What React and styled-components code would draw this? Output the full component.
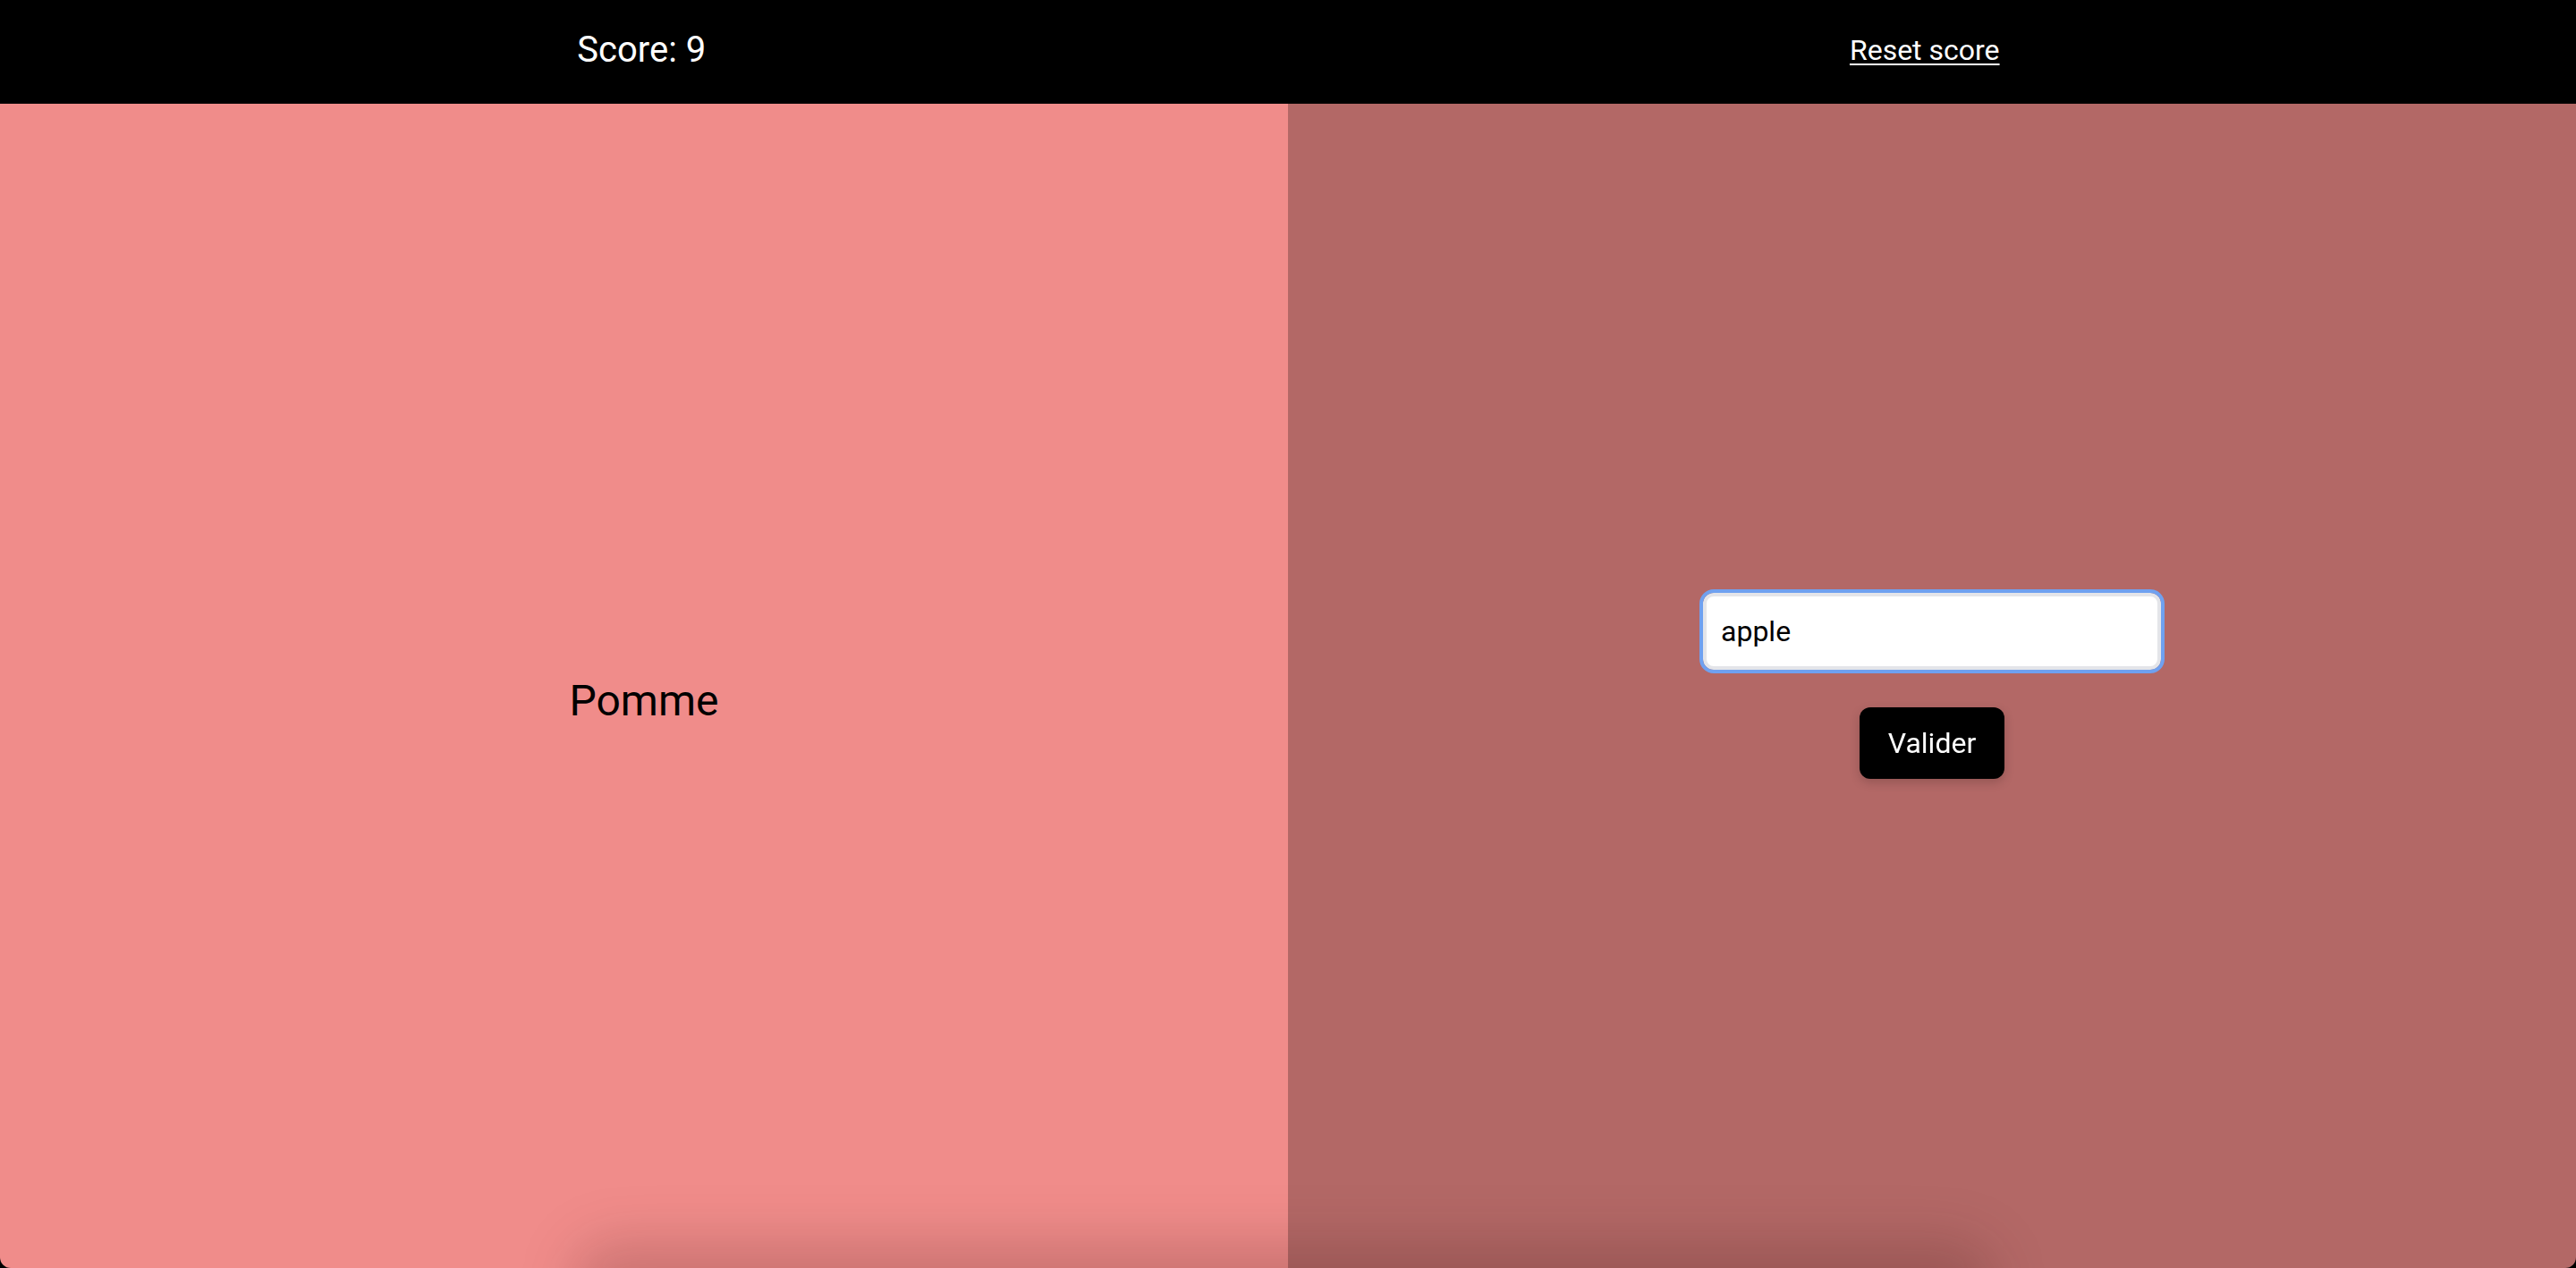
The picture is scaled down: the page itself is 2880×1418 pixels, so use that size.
import React, { useEffect, useRef } from 'react';
import styled, { createGlobalStyle } from 'styled-components';

const GlobalStyle = createGlobalStyle`
  html, body {
    margin: 0;
    padding: 0;
    height: 100%;
    background: #000;
  }
  body {
    font-family: Roboto, "Liberation Sans", Arial, sans-serif;
    overflow: hidden;
  }
  #root {
    height: 100%;
  }
`;

function App() {
  const inputRef = useRef(null);

  useEffect(() => {
    // focus the field with the caret after the typed word
    const el = inputRef.current;
    if (el) {
      el.focus();
      el.setSelectionRange(el.value.length, el.value.length);
    }
  }, []);

  return (
    <Page>
      <GlobalStyle />
      <Header>
        <HeaderCell>
          <Score>Score: 9</Score>
        </HeaderCell>
        <HeaderCell>
          <ResetLink href="#">Reset score</ResetLink>
        </HeaderCell>
      </Header>

      <Board>
        <WordPanel>
          <Word>Pomme</Word>
        </WordPanel>
        <AnswerPanel>
          <AnswerInput ref={inputRef} type="text" defaultValue="apple" />
          <SubmitButton type="button">Valider</SubmitButton>
        </AnswerPanel>
      </Board>

      <DockShadow />
    </Page>
  );
}

const Page = styled.div`
  height: 100vh;
  display: flex;
  flex-direction: column;
  overflow: hidden;
  border-radius: 0 0 12px 12px;
`;

const Header = styled.header`
  height: 116px;
  flex-shrink: 0;
  background: #000;
  display: grid;
  grid-template-columns: 1fr 1fr;
  padding: 0 11px 5px 0;
  box-sizing: border-box;
`;

const HeaderCell = styled.div`
  display: flex;
  align-items: center;
  justify-content: center;
`;

const Score = styled.span`
  color: #fff;
  font-size: 40px;
`;

const ResetLink = styled.a`
  color: #fff;
  font-size: 32px;
  text-decoration: underline;
  text-decoration-thickness: 2px;
  text-underline-offset: 4px;
`;

const Board = styled.main`
  flex: 1;
  display: grid;
  grid-template-columns: 1fr 1fr;
`;

const WordPanel = styled.section`
  background: #f08c8a;
  display: flex;
  align-items: center;
  justify-content: center;
  padding-top: 32px;
`;

const Word = styled.span`
  color: #000;
  font-size: 48px;
`;

const AnswerPanel = styled.section`
  background: #b36866;
  display: flex;
  flex-direction: column;
  align-items: center;
  justify-content: center;
  gap: 42px;
`;

const AnswerInput = styled.input`
  width: 512px;
  height: 86px;
  box-sizing: border-box;
  padding: 0 16px;
  border: 4px solid #e4e5e9;
  border-radius: 12px;
  outline: 4px solid #6fa1f0;
  outline-offset: 0;
  background: #fff;
  color: #000;
  font-family: Roboto, "Liberation Sans", Arial, sans-serif;
  font-size: 32px;
  caret-color: #000;
`;

const SubmitButton = styled.button`
  height: 80px;
  padding: 0 32px;
  border: none;
  border-radius: 12px;
  background: #000;
  color: #fff;
  font-family: Roboto, "Liberation Sans", Arial, sans-serif;
  font-size: 32px;
  box-shadow: 0 4px 12px rgba(0, 0, 0, 0.18);
  cursor: pointer;
`;

const DockShadow = styled.div`
  position: fixed;
  left: 640px;
  bottom: -70px;
  width: 1590px;
  height: 100px;
  border-radius: 50px;
  background: rgba(60, 20, 20, 0.2);
  filter: blur(30px);
  pointer-events: none;
`;

export default App;
